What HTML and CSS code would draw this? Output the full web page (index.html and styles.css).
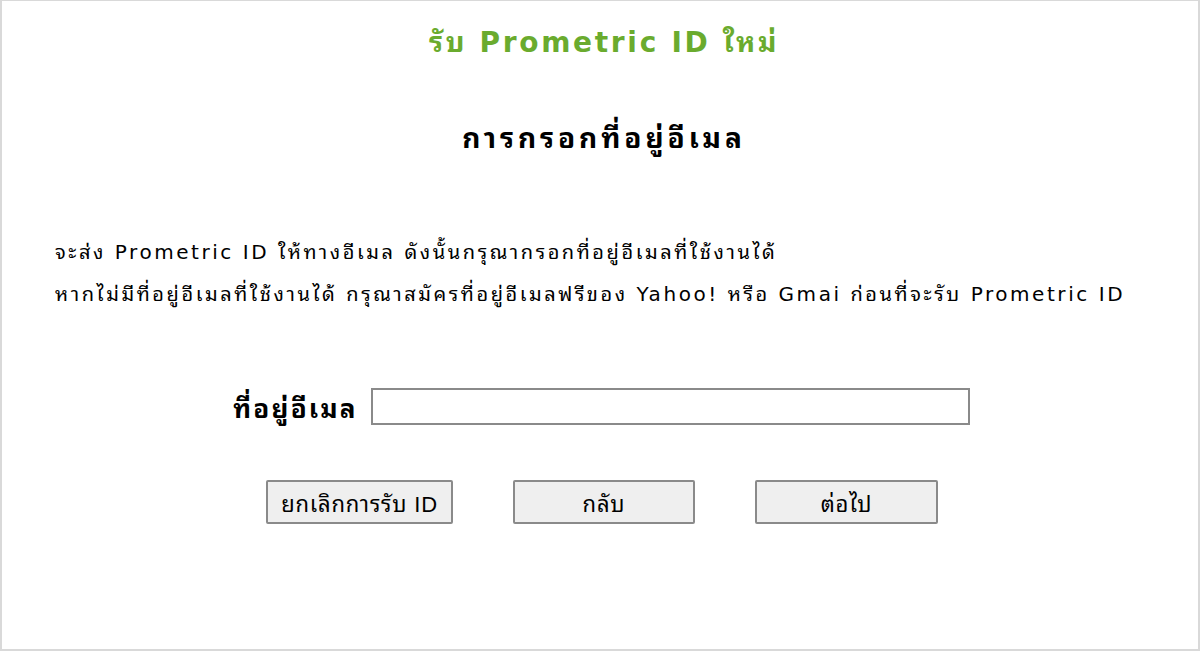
FILE: index.html
```html
<!DOCTYPE html>
<html lang="th">
<head>
<meta charset="utf-8">
<title>รับ Prometric ID ใหม่</title>
<link rel="stylesheet" href="styles.css">
</head>
<body>
<div class="frame">
  <h1 class="title">รับ Prometric ID ใหม่</h1>
  <h2 class="subtitle">การกรอกที่อยู่อีเมล</h2>
  <div class="notice">
    <p>จะส่ง Prometric ID ให้ทางอีเมล ดังนั้นกรุณากรอกที่อยู่อีเมลที่ใช้งานได้</p>
    <p>หากไม่มีที่อยู่อีเมลที่ใช้งานได้ กรุณาสมัครที่อยู่อีเมลฟรีของ Yahoo! หรือ Gmai ก่อนที่จะรับ Prometric ID</p>
  </div>
  <form class="email-form">
    <div class="field">
      <label class="field-label" for="email">ที่อยู่อีเมล</label>
      <input class="field-input" id="email" type="text">
    </div>
    <div class="actions">
      <button type="button" class="btn btn-cancel">ยกเลิกการรับ ID</button>
      <button type="button" class="btn btn-back">กลับ</button>
      <button type="button" class="btn btn-next">ต่อไป</button>
    </div>
  </form>
</div>
</body>
</html>
```

FILE: styles.css
```css
html, body {
  margin: 0;
  padding: 0;
  background: #ffffff;
}

body {
  font-family: "DejaVu Sans", "Noto Sans Thai Looped", sans-serif;
  color: #000000;
}

.frame {
  box-sizing: border-box;
  width: 1200px;
  height: 651px;
  border: 2px solid #d9d9d9;
  border-top-width: 1px;
  padding: 0 53px;
  display: flex;
  flex-direction: column;
}

.title {
  margin: 20px 0 0;
  padding-left: 8px;
  text-align: center;
  font-size: 28px;
  font-weight: bold;
  letter-spacing: 2.7px;
  color: #6aab2e;
  line-height: 44px;
}

.subtitle {
  margin: 52px 0 0;
  padding-left: 8px;
  text-align: center;
  font-size: 28px;
  font-weight: bold;
  letter-spacing: 3.9px;
  line-height: 44px;
}

.notice {
  margin-top: 70px;
  font-size: 20px;
  letter-spacing: 2.55px;
  line-height: 42px;
}

.notice p {
  margin: 0;
}

.email-form {
  margin-top: 70px;
  display: flex;
  flex-direction: column;
  align-items: center;
}

.field {
  display: flex;
  align-items: center;
  gap: 13px;
  margin-left: 3px;
}

.field-label {
  font-family: "Liberation Sans", "Noto Sans Thai Looped", sans-serif;
  font-size: 26px;
  font-weight: bold;
  letter-spacing: 2.2px;
}

.field-input {
  box-sizing: border-box;
  width: 599px;
  height: 37px;
  border: 2px solid #8a8a8a;
  margin: 0;
  padding: 2px 6px;
  font-size: 17px;
  font-family: inherit;
}

.actions {
  margin-top: 53px;
  display: flex;
  gap: 60px;
  margin-left: 4px;
}

.btn {
  box-sizing: border-box;
  height: 44px;
  background: #efefef;
  border: 2px solid #8a8a8a;
  border-radius: 2px;
  font-family: "Liberation Sans", "Noto Sans Thai Looped", sans-serif;
  font-size: 22px;
  letter-spacing: 0.8px;
  color: #000000;
  padding: 0 6px;
}

.btn-cancel { width: 187px; }
.btn-back { width: 182px; }
.btn-next { width: 183px; }
```
